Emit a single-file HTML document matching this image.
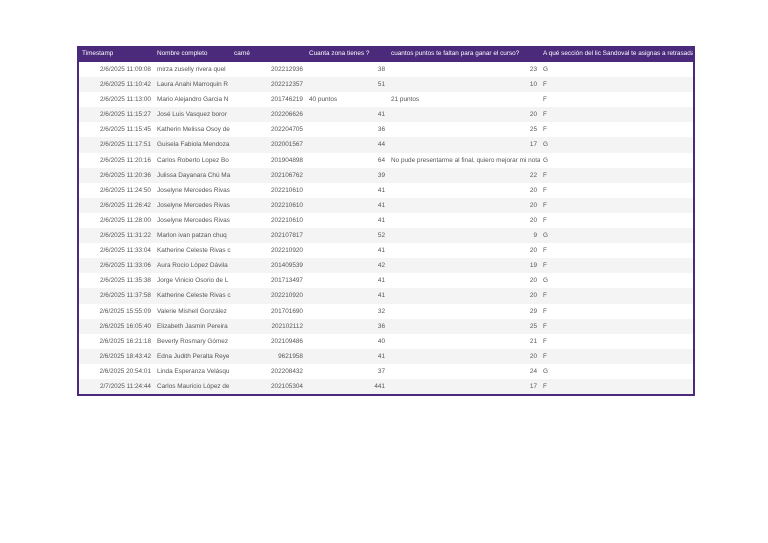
<!DOCTYPE html>
<html><head><meta charset="utf-8"><style>
body{margin:0;width:768px;height:543px;background:#fff;font-family:"Liberation Sans",sans-serif;overflow:hidden}
.wrap{position:absolute;left:77px;top:46px;width:614px;border-left:2px solid #4b2a7b;border-right:2px solid #4b2a7b;border-bottom:2px solid #4b2a7b;overflow:hidden}
table{border-collapse:collapse;table-layout:fixed;width:614px;font-size:6.4px;color:#555}
th{background:#4b2a7b;color:#fff;font-weight:normal;text-align:left;height:16px;line-height:16px;padding:0 3px;white-space:nowrap;overflow:hidden}
td{height:15.1px;line-height:15.1px;padding:0 3px;white-space:nowrap;overflow:hidden}
tr:nth-child(even) td{background:#f4f4f5}
.r{text-align:right}
</style></head><body><div class="wrap"><table>
<colgroup><col style="width:75px"><col style="width:77px"><col style="width:75px"><col style="width:82px"><col style="width:152px"><col style="width:153px"></colgroup>
<thead><tr><th>Timestamp</th><th>Nombre completo</th><th>carné</th><th>Cuanta zona tienes ?</th><th>cuantos puntos te faltan para ganar el curso?</th><th>A qué sección del lic Sandoval te asignas a retrasada</th></tr></thead>
<tbody>
<tr><td class="r">2/6/2025 11:09:08</td><td>mirza zuselly rivera quel</td><td class="r">202212936</td><td class="r">38</td><td class="r">23</td><td>G</td></tr>
<tr><td class="r">2/6/2025 11:10:42</td><td>Laura Anahi Marroquin R</td><td class="r">202212357</td><td class="r">51</td><td class="r">10</td><td>F</td></tr>
<tr><td class="r">2/6/2025 11:13:00</td><td>Mario Alejandro Garcia N</td><td class="r">201746219</td><td>40 puntos</td><td>21 puntos</td><td>F</td></tr>
<tr><td class="r">2/6/2025 11:15:27</td><td>José Luis Vasquez boror</td><td class="r">202206626</td><td class="r">41</td><td class="r">20</td><td>F</td></tr>
<tr><td class="r">2/6/2025 11:15:45</td><td>Katherin Melissa Osoy de</td><td class="r">202204705</td><td class="r">36</td><td class="r">25</td><td>F</td></tr>
<tr><td class="r">2/6/2025 11:17:51</td><td>Guisela Fabiola Mendoza</td><td class="r">202001567</td><td class="r">44</td><td class="r">17</td><td>G</td></tr>
<tr><td class="r">2/6/2025 11:20:16</td><td>Carlos Roberto Lopez Bo</td><td class="r">201904898</td><td class="r">64</td><td>No pude presentarme al final, quiero mejorar mi nota</td><td>G</td></tr>
<tr><td class="r">2/6/2025 11:20:36</td><td>Julissa Dayanara Chú Ma</td><td class="r">202106762</td><td class="r">39</td><td class="r">22</td><td>F</td></tr>
<tr><td class="r">2/6/2025 11:24:50</td><td>Joselyne Mercedes Rivas</td><td class="r">202210610</td><td class="r">41</td><td class="r">20</td><td>F</td></tr>
<tr><td class="r">2/6/2025 11:26:42</td><td>Joselyne Mercedes Rivas</td><td class="r">202210610</td><td class="r">41</td><td class="r">20</td><td>F</td></tr>
<tr><td class="r">2/6/2025 11:28:00</td><td>Joselyne Mercedes Rivas</td><td class="r">202210610</td><td class="r">41</td><td class="r">20</td><td>F</td></tr>
<tr><td class="r">2/6/2025 11:31:22</td><td>Marlon ivan patzan chuq</td><td class="r">202107817</td><td class="r">52</td><td class="r">9</td><td>G</td></tr>
<tr><td class="r">2/6/2025 11:33:04</td><td>Katherine Celeste Rivas c</td><td class="r">202210920</td><td class="r">41</td><td class="r">20</td><td>F</td></tr>
<tr><td class="r">2/6/2025 11:33:06</td><td>Aura Rocío López Dávila</td><td class="r">201409539</td><td class="r">42</td><td class="r">19</td><td>F</td></tr>
<tr><td class="r">2/6/2025 11:35:38</td><td>Jorge Vinicio Osorio de L</td><td class="r">201713497</td><td class="r">41</td><td class="r">20</td><td>G</td></tr>
<tr><td class="r">2/6/2025 11:37:58</td><td>Katherine Celeste Rivas c</td><td class="r">202210920</td><td class="r">41</td><td class="r">20</td><td>F</td></tr>
<tr><td class="r">2/6/2025 15:55:09</td><td>Valerie Mishell González</td><td class="r">201701690</td><td class="r">32</td><td class="r">29</td><td>F</td></tr>
<tr><td class="r">2/6/2025 16:05:40</td><td>Elizabeth Jasmin Pereira</td><td class="r">202102112</td><td class="r">36</td><td class="r">25</td><td>F</td></tr>
<tr><td class="r">2/6/2025 16:21:18</td><td>Beverly Rosmary Gómez</td><td class="r">202109486</td><td class="r">40</td><td class="r">21</td><td>F</td></tr>
<tr><td class="r">2/6/2025 18:43:42</td><td>Edna Judith Peralta Reye</td><td class="r">9621958</td><td class="r">41</td><td class="r">20</td><td>F</td></tr>
<tr><td class="r">2/6/2025 20:54:01</td><td>Linda Esperanza Velásqu</td><td class="r">202208432</td><td class="r">37</td><td class="r">24</td><td>G</td></tr>
<tr><td class="r">2/7/2025 11:24:44</td><td>Carlos Mauricio López de</td><td class="r">202105304</td><td class="r">441</td><td class="r">17</td><td>F</td></tr>
</tbody></table></div></body></html>
